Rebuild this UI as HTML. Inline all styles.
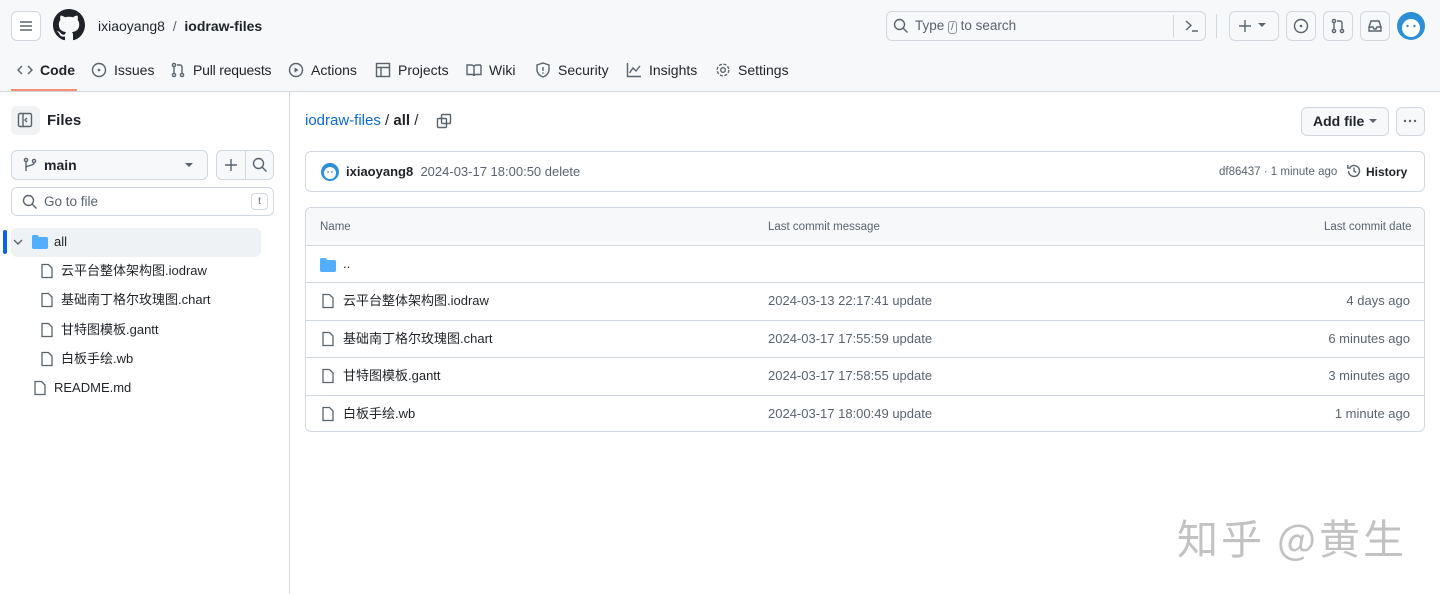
<!DOCTYPE html>
<html><head><meta charset="utf-8"><style>
*{box-sizing:border-box;margin:0;padding:0}
body{width:1440px;height:594px;overflow:hidden;background:#fff;font-family:"Liberation Sans","Noto Sans CJK SC",sans-serif;color:#1f2328;font-size:14px;position:relative}
.a{position:absolute}
svg{display:block}
.hdr{left:0;top:0;width:1440px;height:92px;background:#f6f8fa;border-bottom:1px solid #d0d7de}
.btn{border:1px solid #d0d7de;border-radius:6px;background:#f6f8fa}
.tab{top:62px;font-size:14px;line-height:16px;color:#1f2328;display:flex;align-items:center;gap:7px}
.ic{stroke:#59636e;fill:none;stroke-width:1.4}
.row{left:305px;width:1120px;height:37.5px;border-top:1px solid #d0d7de}
.row span{position:absolute;top:0;line-height:36px;font-size:13px}
.gray{color:#59636e}
.t{line-height:20px;font-size:13px}
</style></head><body>
<div class="a hdr"></div>
<div class="a btn" style="left:11px;top:11px;width:30px;height:30px;background:#fff"></div>
<svg class="a" style="left:18px;top:18px" width="16" height="16"><path d="M2 4h12M2 8h12M2 12h12" stroke="#59636e" stroke-width="1.4"/></svg>
<svg class="a" style="left:53px;top:9px" width="32" height="32" viewBox="0 0 16 16"><path fill="#1f2328" d="M8 0C3.58 0 0 3.58 0 8c0 3.540 2.29 6.53 5.47 7.59.4.07.55-.17.55-.38 0-.19-.01-.82-.01-1.49-2.01.37-2.530-.49-2.690-.94-.09-.23-.48-.94-.82-1.13-.28-.15-.68-.52-.01-.53.63-.01 1.08.58 1.23.82.72 1.21 1.87.87 2.33.66.07-.52.28-.87.51-1.07-1.78-.2-3.64-.89-3.64-3.95 0-.87.31-1.59.82-2.15-.08-.2-.36-1.02.08-2.12 0 0 .67-.21 2.2.82.64-.18 1.32-.27 2-.27.68 0 1.36.09 2 .27 1.53-1.04 2.2-.82 2.2-.82.44 1.1.16 1.92.08 2.12.51.56.82 1.27.82 2.15 0 3.07-1.87 3.75-3.65 3.95.29.25.54.73.54 1.48 0 1.07-.01 1.93-.01 2.2 0 .21.15.46.55.38A8.013 8.013 0 0016 8c0-4.42-3.58-8-8-8z"/></svg>
<div class="a" style="left:98px;top:17px;font-size:14px;line-height:18px">ixiaoyang8 <span style="color:#59636e">&nbsp;/&nbsp;</span> <b style="font-weight:600">iodraw-files</b></div>
<div class="a btn" style="left:886px;top:11px;width:320px;height:30px;background:#f6f8fa"></div>
<svg class="a" style="left:893px;top:18px" width="16" height="16"><circle cx="6.5" cy="6.5" r="5" class="ic"/><path d="M10 10l4.5 4.5" class="ic"/></svg>
<div class="a gray" style="left:915px;top:17px;font-size:13.5px;line-height:18px">Type <span style="border:1px solid #8c959f;border-radius:3px;font-size:10px;padding:0 2px">/</span> to search</div>
<div class="a" style="left:1173px;top:15px;width:1px;height:22px;background:#d0d7de"></div>
<svg class="a" style="left:1184px;top:18px" width="16" height="16"><path d="M2 3l5 4.5L2 12M8 13h6" class="ic"/></svg>
<div class="a" style="left:1216px;top:14px;width:1px;height:24px;background:#d0d7de"></div>
<div class="a btn" style="left:1229px;top:11px;width:50px;height:30px;background:#f6f8fa"></div>
<svg class="a" style="left:1237px;top:18px" width="16" height="16"><path d="M8 2v12M2 8h12" class="ic"/></svg>
<svg class="a" style="left:1258px;top:23px" width="8" height="5"><path d="M0 0h8L4 4z" fill="#59636e"/></svg>
<div class="a btn" style="left:1286px;top:11px;width:30px;height:30px"></div>
<svg class="a" style="left:1293px;top:18px" width="16" height="16"><circle cx="8" cy="8" r="6.5" class="ic"/><circle cx="8" cy="8" r="1.3" fill="#59636e"/></svg>
<div class="a btn" style="left:1323px;top:11px;width:30px;height:30px"></div>
<svg class="a" style="left:1330px;top:18px" width="16" height="16"><circle cx="4" cy="3" r="1.6" class="ic"/><circle cx="4" cy="13" r="1.6" class="ic"/><circle cx="12" cy="13" r="1.6" class="ic"/><path d="M4 5v6M12 11V5c0-1-1-2-2-2H7" class="ic"/></svg>
<div class="a btn" style="left:1360px;top:11px;width:30px;height:30px"></div>
<svg class="a" style="left:1367px;top:18px" width="16" height="16"><path d="M2 9l2-6h8l2 6v4H2zM2 9h4l1 2h2l1-2h4" class="ic"/></svg>
<svg class="a" style="left:1396px;top:11px" width="30" height="30"><circle cx="15" cy="15" r="14" fill="#2d8fd8"/><circle cx="15" cy="17" r="9" fill="#fff"/><circle cx="11.5" cy="15" r="1.2" fill="#2d8fd8"/><circle cx="18.5" cy="15" r="1.2" fill="#2d8fd8"/><circle cx="15" cy="3" r="2" fill="#2d8fd8"/></svg>

<svg class="a" style="left:17px;top:62px" width="16" height="16"><path d="M5 4L1 8l4 4M11 4l4 4-4 4" class="ic"/></svg>
<div class="a tab" style="left:40px"><b style="font-weight:600">Code</b></div>
<div class="a" style="left:11px;top:89px;width:66px;height:2px;background:#fd8c73"></div>
<svg class="a" style="left:91px;top:62px" width="16" height="16"><circle cx="8" cy="8" r="6.5" class="ic"/><circle cx="8" cy="8" r="1.3" fill="#59636e"/></svg>
<div class="a tab" style="left:114px">Issues</div>
<svg class="a" style="left:170px;top:62px" width="16" height="16"><circle cx="4" cy="3" r="1.6" class="ic"/><circle cx="4" cy="13" r="1.6" class="ic"/><circle cx="12" cy="13" r="1.6" class="ic"/><path d="M4 5v6M12 11V5c0-1-1-2-2-2H7" class="ic"/></svg>
<div class="a tab" style="left:193px;letter-spacing:-0.2px">Pull requests</div>
<svg class="a" style="left:288px;top:62px" width="16" height="16"><circle cx="8" cy="8" r="6.5" class="ic"/><path d="M6.5 5.5v5l4-2.5z" fill="#59636e"/></svg>
<div class="a tab" style="left:311px">Actions</div>
<svg class="a" style="left:375px;top:62px" width="16" height="16"><rect x="1.5" y="1.5" width="13" height="13" class="ic"/><path d="M1.5 5.5h13M6 5.5v9" class="ic"/></svg>
<div class="a tab" style="left:398px">Projects</div>
<svg class="a" style="left:466px;top:62px" width="16" height="16"><path d="M1 3h4.5c1.5 0 2.5 1 2.5 2v9c0-1-1-1.5-2-1.5H1zM15 3h-4.5C9 3 8 4 8 5M15 3v9.5h-5c-1 0-2 .5-2 1.5" class="ic"/></svg>
<div class="a tab" style="left:489px">Wiki</div>
<svg class="a" style="left:535px;top:62px" width="16" height="16"><path d="M8 1l6 2v5c0 3-3 6-6 7-3-1-6-4-6-7V3z" class="ic"/><path d="M8 5v4" class="ic"/><circle cx="8" cy="11" r=".8" fill="#59636e"/></svg>
<div class="a tab" style="left:558px">Security</div>
<svg class="a" style="left:626px;top:62px" width="16" height="16"><path d="M1.5 1v13.5H15M3.5 11l3.5-5 3 3 4-5" class="ic"/></svg>
<div class="a tab" style="left:649px">Insights</div>
<svg class="a" style="left:715px;top:62px" width="16" height="16"><circle cx="8" cy="8" r="2.3" class="ic"/><circle cx="8" cy="8" r="5.8" class="ic" stroke-dasharray="3 1.6"/></svg>
<div class="a tab" style="left:738px">Settings</div>

<div class="a" style="left:289px;top:92px;width:1px;height:502px;background:#d0d7de"></div>
<div class="a" style="left:11px;top:106px;width:29px;height:29px;background:#f0f2f4;border-radius:6px"></div>
<svg class="a" style="left:17px;top:112px" width="16" height="16"><rect x="1.5" y="1.5" width="13" height="13" rx="1.5" class="ic"/><path d="M6 1.5v13M10 6l-2 2 2 2" class="ic"/></svg>
<div class="a" style="left:47px;top:111px;font-size:15px;line-height:20px;font-weight:600">Files</div>
<div class="a btn" style="left:11px;top:150px;width:197px;height:30px"></div>
<svg class="a" style="left:22px;top:157px" width="16" height="16"><circle cx="4" cy="3" r="1.6" class="ic"/><circle cx="12" cy="4" r="1.6" class="ic"/><path d="M4 5v9M12 6c0 3-8 2-8 5" class="ic"/></svg>
<div class="a" style="left:44px;top:156px;font-weight:600;line-height:18px">main</div>
<svg class="a" style="left:185px;top:163px" width="8" height="5"><path d="M0 0h8L4 4z" fill="#59636e"/></svg>
<div class="a btn" style="left:216px;top:150px;width:58px;height:30px"></div>
<div class="a" style="left:245px;top:150px;width:1px;height:30px;background:#d0d7de"></div>
<svg class="a" style="left:223px;top:157px" width="16" height="16"><path d="M8 2v12M2 8h12" class="ic"/></svg>
<svg class="a" style="left:252px;top:157px" width="16" height="16"><circle cx="6.5" cy="6.5" r="5" class="ic"/><path d="M10 10l4.5 4.5" class="ic"/></svg>
<div class="a" style="left:11px;top:187px;width:263px;height:29px;border:1px solid #d0d7de;border-radius:6px"></div>
<svg class="a" style="left:22px;top:194px" width="16" height="16"><circle cx="6.5" cy="6.5" r="5" class="ic"/><path d="M10 10l4.5 4.5" class="ic"/></svg>
<div class="a gray" style="left:44px;top:193px;line-height:18px;font-size:13.5px">Go to file</div>
<div class="a" style="left:251px;top:193px;width:17px;height:17px;border:1px solid #d0d7de;border-radius:4px;font-size:10px;text-align:center;line-height:15px;color:#59636e">t</div>
<div class="a" style="left:11px;top:228px;width:250px;height:29px;background:#eff2f5;border-radius:6px"></div>
<div class="a" style="left:3px;top:230px;width:4px;height:24px;background:#0969da;border-radius:2px"></div>
<svg class="a" style="left:12px;top:236px" width="12" height="12"><path d="M2 4l4 4 4-4" class="ic"/></svg>
<svg class="a" style="left:32px;top:235px" width="16" height="14"><path d="M0 1.5C0 .7.7 0 1.5 0h4l1.5 2h7.5c.8 0 1.5.7 1.5 1.5v9c0 .8-.7 1.5-1.5 1.5h-13C.7 14 0 13.3 0 12.5z" fill="#54aeff"/></svg>
<div class="a t" style="left:54px;top:232px">all</div>
<svg width="0" height="0" style="position:absolute"><defs><symbol id="f" viewBox="0 0 16 16"><path d="M3 1.5h6.5l3.5 3.5v9.5H3z" fill="none" stroke="#59636e" stroke-width="1.3"/></symbol></defs></svg>
<svg class="a" style="left:39px;top:263px" width="16" height="16"><use href="#f"/></svg><div class="a t" style="left:61px;top:261px">云平台整体架构图.iodraw</div>
<svg class="a" style="left:39px;top:292px" width="16" height="16"><use href="#f"/></svg><div class="a t" style="left:61px;top:290px">基础南丁格尔玫瑰图.chart</div>
<svg class="a" style="left:39px;top:322px" width="16" height="16"><use href="#f"/></svg><div class="a t" style="left:61px;top:320px">甘特图模板.gantt</div>
<svg class="a" style="left:39px;top:351px" width="16" height="16"><use href="#f"/></svg><div class="a t" style="left:61px;top:349px">白板手绘.wb</div>
<svg class="a" style="left:32px;top:380px" width="16" height="16"><use href="#f"/></svg><div class="a t" style="left:54px;top:378px">README.md</div>

<div class="a" style="left:305px;top:111px;font-size:15px;line-height:20px"><span style="color:#0969da">iodraw-files</span> / <b style="font-weight:600">all</b> /</div>
<svg class="a" style="left:436px;top:113px" width="16" height="16"><rect x="1.5" y="5.5" width="9" height="9" rx="1" class="ic"/><rect x="5.5" y="1.5" width="9" height="9" rx="1" class="ic"/></svg>
<div class="a btn" style="left:1301px;top:107px;width:88px;height:29px"></div>
<div class="a" style="left:1313px;top:112px;font-weight:600;line-height:18px">Add file</div>
<svg class="a" style="left:1369px;top:119px" width="8" height="5"><path d="M0 0h8L4 4z" fill="#59636e"/></svg>
<div class="a btn" style="left:1396px;top:107px;width:29px;height:29px"></div>
<svg class="a" style="left:1402px;top:113px" width="16" height="16"><circle cx="3" cy="8" r="1.2" fill="#59636e"/><circle cx="8" cy="8" r="1.2" fill="#59636e"/><circle cx="13" cy="8" r="1.2" fill="#59636e"/></svg>

<div class="a" style="left:305px;top:151px;width:1120px;height:41px;border:1px solid #d0d7de;border-radius:6px"></div>
<svg class="a" style="left:320px;top:162px" width="20" height="20"><circle cx="10" cy="10" r="9" fill="#2d8fd8"/><circle cx="10" cy="11" r="6" fill="#fff"/><circle cx="8" cy="10" r=".9" fill="#2d8fd8"/><circle cx="12" cy="10" r=".9" fill="#2d8fd8"/></svg>
<div class="a" style="left:346px;top:163px;font-size:13px;line-height:18px"><b style="font-weight:600">ixiaoyang8</b> <span class="gray">&nbsp;2024-03-17 18:00:50 delete</span></div>
<div class="a gray" style="left:1219px;top:164px;font-size:11.5px;line-height:16px">df86437 · 1 minute ago</div>
<svg class="a" style="left:1346px;top:163px" width="16" height="16"><path d="M2.5 8a5.5 5.5 0 1 0 1.6-3.9M1.8 2v3h3M8 4.5V8l2.2 1.5" class="ic"/></svg>
<div class="a" style="left:1366px;top:164px;font-size:12px;line-height:16px;font-weight:600">History</div>

<div class="a" style="left:305px;top:207px;width:1120px;height:225px;border:1px solid #d0d7de;border-radius:6px;overflow:hidden">
<div style="height:38px;background:#f6f8fa"></div></div>
<div class="a gray" style="left:320px;top:219px;font-size:11.5px;line-height:16px">Name</div>
<div class="a gray" style="left:768px;top:219px;font-size:11.5px;line-height:16px">Last commit message</div>
<div class="a gray" style="left:1324px;top:219px;font-size:11.5px;line-height:16px">Last commit date</div>
<div class="a row" style="top:244.5px"><svg class="a" style="left:15px;top:12px" width="16" height="14"><path d="M0 1.5C0 .7.7 0 1.5 0h4l1.5 2h7.5c.8 0 1.5.7 1.5 1.5v9c0 .8-.7 1.5-1.5 1.5h-13C.7 14 0 13.3 0 12.5z" fill="#54aeff"/></svg><span style="left:38px">..</span></div>
<div class="a row" style="top:282px"><svg class="a" style="left:15px;top:10px" width="16" height="16"><use href="#f"/></svg><span style="left:38px">云平台整体架构图.iodraw</span><span class="gray" style="left:463px">2024-03-13 22:17:41 update</span><span class="gray" style="right:15px">4 days ago</span></div>
<div class="a row" style="top:319.5px"><svg class="a" style="left:15px;top:10px" width="16" height="16"><use href="#f"/></svg><span style="left:38px">基础南丁格尔玫瑰图.chart</span><span class="gray" style="left:463px">2024-03-17 17:55:59 update</span><span class="gray" style="right:15px">6 minutes ago</span></div>
<div class="a row" style="top:357px"><svg class="a" style="left:15px;top:10px" width="16" height="16"><use href="#f"/></svg><span style="left:38px">甘特图模板.gantt</span><span class="gray" style="left:463px">2024-03-17 17:58:55 update</span><span class="gray" style="right:15px">3 minutes ago</span></div>
<div class="a row" style="top:394.5px"><svg class="a" style="left:15px;top:10px" width="16" height="16"><use href="#f"/></svg><span style="left:38px">白板手绘.wb</span><span class="gray" style="left:463px">2024-03-17 18:00:49 update</span><span class="gray" style="right:15px">1 minute ago</span></div>

<div class="a" style="left:1177px;top:508px;font-size:41px;line-height:56px;color:#c2c2c2;font-family:'Noto Sans CJK SC',sans-serif;letter-spacing:3px">知乎 @黄生</div>
</body></html>
